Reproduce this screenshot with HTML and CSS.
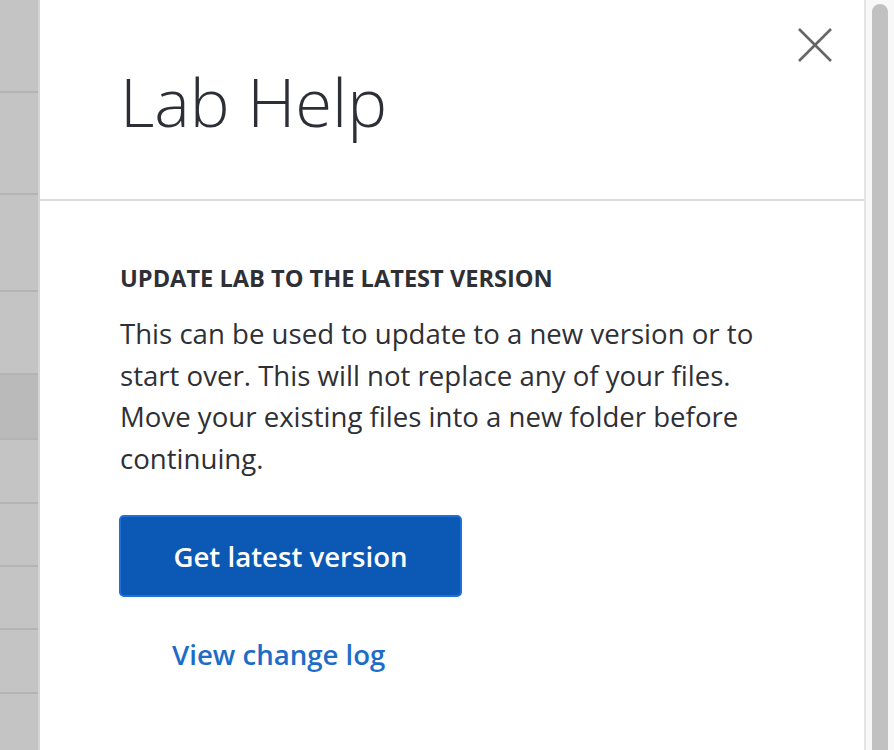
FILE: index.html
```html
<!DOCTYPE html>
<html lang="en">
<head>
<meta charset="utf-8">
<title>Lab Help</title>
<link rel="stylesheet" href="styles.css">
</head>
<body>
<div class="screen">
  <div class="backdrop">
    <div class="row r1"></div>
    <div class="row r2"></div>
    <div class="row r3"></div>
    <div class="row r4"></div>
    <div class="row r5 active"></div>
    <div class="row r6"></div>
    <div class="row r7"></div>
    <div class="row r8"></div>
    <div class="row r9"></div>
    <div class="row r10"></div>
  </div>
  <div class="panel">
    <header class="panel-header">
      <h1 class="title">Lab Help</h1>
      <button class="close" aria-label="Close">
        <svg width="36" height="36" viewBox="0 0 36 36"><path d="M2 2 L34 34 M34 2 L2 34" stroke="#666" stroke-width="2.6" fill="none"/></svg>
      </button>
    </header>
    <section class="panel-body">
      <h2 class="section-title">UPDATE LAB TO THE LATEST VERSION</h2>
      <p class="desc">This can be used to update to a new version or to start over. This will not replace any of your files. Move your existing files into a new folder before continuing.</p>
      <div class="actions">
        <button class="btn btn-primary">Get latest version</button>
        <button class="btn btn-link">View change log</button>
      </div>
    </section>
  </div>
  <div class="scrollbar"><div class="thumb"></div></div>
</div>
</body>
</html>
```
FILE: styles.css
```css
html, body {
  margin: 0;
  padding: 0;
  height: 100%;
  overflow: hidden;
}
body {
  font-family: "Open Sans", "Noto Sans", sans-serif;
  color: #2f3035;
  background: #fff;
}
.screen {
  display: flex;
  height: 750px;
}
.backdrop {
  width: 38px;
  flex: none;
  background: #c4c4c4;
  border-right: 2px solid #d4d4d4;
  display: flex;
  flex-direction: column;
}
.row {
  border-bottom: 2px solid #b4b4b4;
  flex: none;
}
.r1 { height: 91px; }
.r2 { height: 100px; }
.r3 { height: 95px; }
.r4 { height: 81px; }
.r5 { height: 63px; }
.r6 { height: 62px; }
.r7 { height: 61px; }
.r8 { height: 61px; }
.r9 { height: 62px; }
.r10 { flex: 1; border-bottom: 0; }
.row.active { background: #bababa; }
.panel {
  flex: 1;
  background: #fff;
  display: flex;
  flex-direction: column;
}
.panel-header {
  position: relative;
  border-bottom: 2px solid #dcdcdc;
  box-sizing: border-box;
  height: 201px;
  padding: 61px 0 0 80px;
}
.title {
  margin: 0;
  font-size: 67px;
  font-weight: 300;
  line-height: 80px;
  color: #2c2f36;
}
.close {
  position: absolute;
  top: 27px;
  right: 31px;
  width: 36px;
  height: 36px;
  padding: 0;
  border: 0;
  background: none;
  cursor: pointer;
}
.close svg { display: block; }
.panel-body {
  padding: 61px 80px 0 79px;
}
.section-title {
  margin: 0 0 0 1px;
  font-size: 23.6px;
  font-weight: 700;
  line-height: 32px;
  color: #2f3035;
}
.desc {
  margin: 19px 0 0 1px;
  max-width: 664px;
  font-size: 27.6px;
  line-height: 41.7px;
  color: #2f3035;
}
.actions {
  margin-top: 35px;
  display: flex;
  flex-direction: column;
  align-items: flex-start;
  gap: 37px;
}
.btn {
  font-family: "Open Sans", "Noto Sans", sans-serif;
  font-size: 27.6px;
  font-weight: 600;
  line-height: 36px;
  border-radius: 5px;
  cursor: pointer;
}
.btn-primary {
  width: 343px;
  height: 82px;
  box-sizing: border-box;
  padding: 0;
  background: #0b58b5;
  color: #fff;
  border: 2px solid #1e6fd8;
}
.btn-link {
  background: none;
  border: 2px solid transparent;
  color: #1d6dc8;
  padding: 0 51px;
}
.scrollbar {
  width: 28px;
  flex: none;
  background: #f8f8f8;
  border-left: 2px solid #e4e4e4;
  position: relative;
}
.thumb {
  position: absolute;
  top: 4px;
  left: 6px;
  width: 16px;
  bottom: 0;
  background: #c1c1c1;
  border-radius: 8px 8px 0 0;
}
```
